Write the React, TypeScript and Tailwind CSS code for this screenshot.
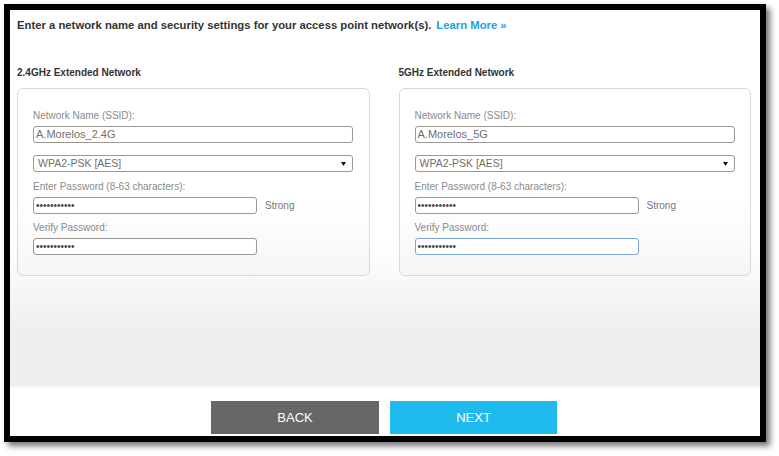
import React from 'react'

const font = { fontFamily: '"Liberation Sans", Arial, sans-serif' }

function Field({ label, children }: { label: string; children: React.ReactNode }) {
  return (
    <div>
      <div className="text-[10px] leading-[13px] text-[#8a8a8a] mb-[4px]">{label}</div>
      {children}
    </div>
  )
}

function TextBox({ value, width, focused = false }: { value: string; width: string; focused?: boolean }) {
  return (
    <div
      className={`${width} h-[17px] bg-white rounded-[3px] border flex items-center pl-[2px] text-[11px] text-[#6f6f6f] ${
        focused ? 'border-[#79a6db]' : 'border-[#9e9791]'
      }`}
    >
      {value}
    </div>
  )
}

function PasswordBox({ focused = false }: { focused?: boolean }) {
  return (
    <div
      className={`w-[224px] h-[17px] bg-white rounded-[3px] border flex items-center pl-[2px] ${
        focused ? 'border-[#79a6db]' : 'border-[#9e9791]'
      }`}
    >
      <span className="text-[10px] leading-none text-[#444]">•••••••••••</span>
    </div>
  )
}

function NetworkCard({ title, ssid, focusVerify = false }: { title: string; ssid: string; focusVerify?: boolean }) {
  return (
    <div>
      <div className="text-[10px] leading-[13px] font-bold text-[#333] mt-[34px]">{title}</div>
      <div className="mt-[9px] rounded-[6px] border border-[#d9d9d9] bg-[linear-gradient(to_bottom,#ffffff_0%,#ffffff_60%,#f6f6f6_100%)] px-[15px] pt-[20px] pb-[20px]">
        <Field label="Network Name (SSID):">
          <TextBox value={ssid} width="w-[320px]" />
        </Field>
        <div className="mt-[12px] w-[320px] h-[17px] bg-white rounded-[3px] border border-[#9e9791] flex items-center justify-between pl-[4px] pr-[6px] text-[10.5px] text-[#6f6f6f]">
          <span>WPA2-PSK [AES]</span>
          <svg width="5" height="4" viewBox="0 0 5 4">
            <path d="M0 0 H5 L2.5 4 Z" fill="#111" />
          </svg>
        </div>
        <div className="mt-[8px]">
          <Field label="Enter Password (8-63 characters):">
            <div className="flex items-center">
              <PasswordBox />
              <span className="ml-[8px] text-[10px] text-[#777]">Strong</span>
            </div>
          </Field>
        </div>
        <div className="mt-[7px]">
          <Field label="Verify Password:">
            <PasswordBox focused={focusVerify} />
          </Field>
        </div>
      </div>
    </div>
  )
}

export default function App() {
  return (
    <div className="w-[779px] h-[456px] bg-white overflow-hidden" style={font}>
      <div className="ml-[4px] mt-[4px] w-[762px] h-[438px] border-[6px] border-black bg-white shadow-[4px_4px_6px_rgba(0,0,0,0.55)] flex flex-col">
        <div className="relative z-10 h-[375px] pl-[7px] pr-[9px] bg-[linear-gradient(to_bottom,#ffffff_0%,#ffffff_62%,#efefef_85%,#efefef_100%)] shadow-[0_1px_3px_rgba(0,0,0,0.12)]">
          <div className="pt-[8px] text-[11.3px] leading-[14px] font-bold text-[#333]">
            Enter a network name and security settings for your access point network(s).
            <span className="ml-[5px] text-[#1c9fe0]">Learn More »</span>
          </div>
          <div className="grid grid-cols-2 gap-[29px]">
            <NetworkCard title="2.4GHz Extended Network" ssid="A.Morelos_2.4G" />
            <NetworkCard title="5GHz Extended Network" ssid="A.Morelos_5G" focusVerify />
          </div>
        </div>
        <div className="flex-1 bg-white flex justify-center gap-[11px] pt-[16px] pr-[2px]">
          <button className="w-[168px] h-[33px] bg-[#676767] text-white text-[13px]">BACK</button>
          <button className="w-[167px] h-[33px] bg-[#1fbaee] text-white text-[13px]">NEXT</button>
        </div>
      </div>
    </div>
  )
}
